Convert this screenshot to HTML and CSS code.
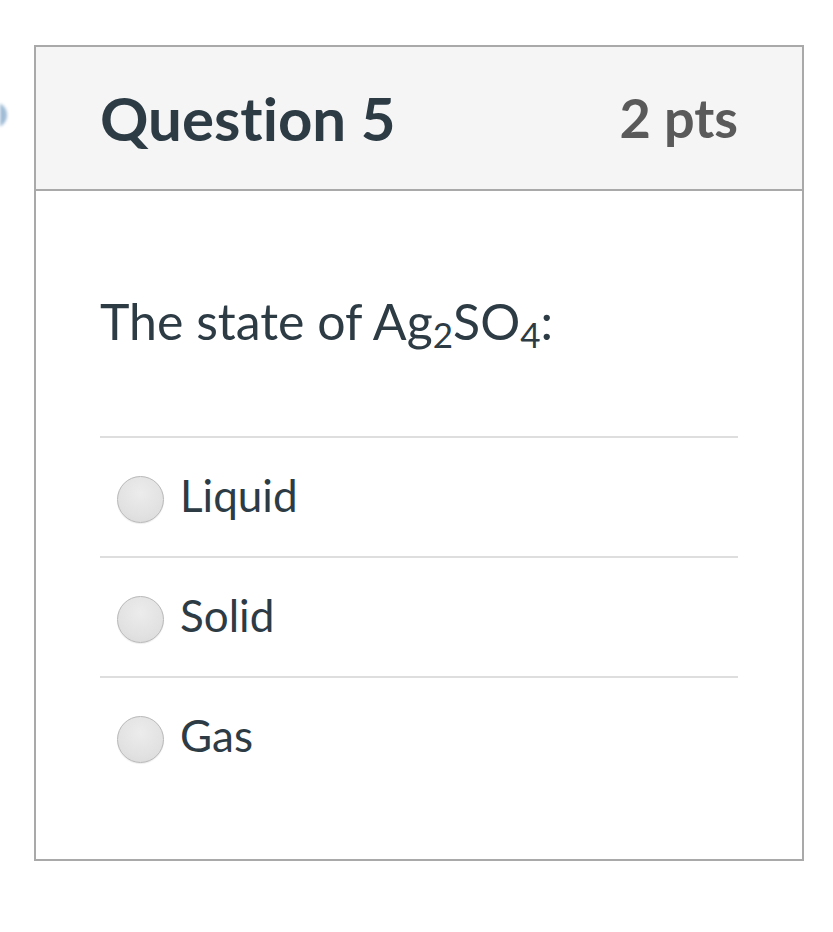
FILE: index.html
```html
<!DOCTYPE html>
<html lang="en">
<head>
<meta charset="utf-8">
<title>Question 5</title>
<link rel="stylesheet" href="styles.css">
</head>
<body>
<div class="page">
  <svg class="side-marker" width="14" height="34" viewBox="0 0 14 34" aria-hidden="true">
    <circle cx="-6" cy="17" r="13" fill="#9fbcd6"/>
  </svg>
  <div class="card">
    <div class="card-header">
      <h2 class="title">Question 5</h2>
      <span class="points">2 pts</span>
    </div>
    <div class="card-body">
      <p class="question">The state of Ag<span class="sub">2</span>SO<span class="sub">4</span>:</p>
      <div class="answers">
        <label class="answer"><span class="radio"></span><span class="answer-text">Liquid</span></label>
        <label class="answer"><span class="radio"></span><span class="answer-text">Solid</span></label>
        <label class="answer"><span class="radio"></span><span class="answer-text">Gas</span></label>
      </div>
    </div>
  </div>
</div>
</body>
</html>
```

FILE: styles.css
```css
html, body {
  margin: 0;
  padding: 0;
  background: #ffffff;
}

body {
  font-family: Lato, "Open Sans", "Liberation Sans", sans-serif;
  font-variant-ligatures: none;
  color: #2d3b45;
}

.page {
  position: relative;
  padding: 45px 0 0 34px;
}

.side-marker {
  position: absolute;
  left: 0;
  top: 98px;
  filter: blur(1.5px);
}

.card {
  width: 766px;
  height: 812px;
  border: 2px solid #a9a9a9;
  background: #ffffff;
}

.card-header {
  height: 142px;
  background: #f5f5f5;
  border-bottom: 2px solid #a9a9a9;
  display: flex;
  align-items: center;
  justify-content: space-between;
  padding: 0 64px;
}

.title {
  margin: 0;
  font-size: 60px;
  font-weight: 700;
  color: #2d3b45;
  line-height: 1.2;
}

.points {
  font-size: 54px;
  font-weight: 700;
  color: #5a5a5a;
  line-height: 1.2;
}

.card-body {
  padding: 100px 64px 0;
}

.question {
  margin: 0 0 85px;
  font-size: 50px;
  line-height: 1.2;
  color: #2d3b45;
}

.sub {
  font-size: 0.7em;
  line-height: 0;
  vertical-align: -0.24em;
}

.answers {
  display: flex;
  flex-direction: column;
}

.answer {
  height: 118px;
  border-top: 2px solid #dedede;
  display: flex;
  align-items: center;
  padding-left: 17px;
}

.radio {
  width: 45px;
  height: 45px;
  border-radius: 50%;
  border: 1.5px solid #b8b8b8;
  background: radial-gradient(circle at 50% 35%, #ececec 0%, #e2e2e2 60%, #d8d8d8 100%);
  box-shadow: 0 1px 1px rgba(0,0,0,0.08);
  flex: none;
  margin-top: 4px;
}

.answer-text {
  margin-left: 16px;
  margin-bottom: 4px;
  font-size: 44px;
  line-height: 1.2;
  color: #2d3b45;
}
```
